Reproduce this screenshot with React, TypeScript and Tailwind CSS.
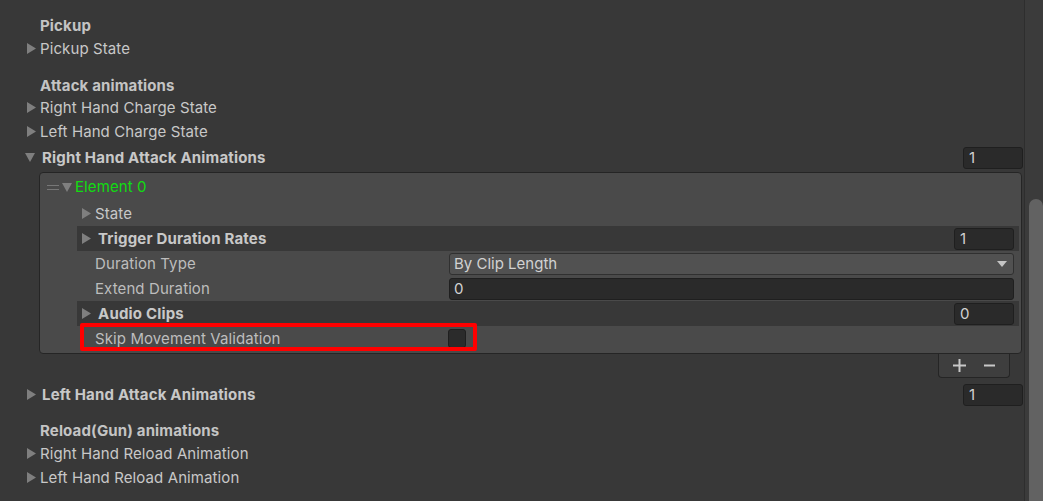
import React from 'react'

const FONT = "font-['Inter','Liberation_Sans',sans-serif]"

// foldout arrows
const TriRight = () => (
  <svg width="9" height="11" viewBox="0 0 9 11" className="shrink-0">
    <path d="M0 0 L9 5.5 L0 11 Z" fill="#7f7f7f" />
  </svg>
)

const TriDown = () => (
  <svg width="10" height="9" viewBox="0 0 10 9" className="shrink-0">
    <path d="M0 0 H10 L5 9 Z" fill="#7f7f7f" />
  </svg>
)

const CountField: React.FC<{ value: string }> = ({ value }) => (
  <div className="w-[60px] h-[22px] rounded-[3px] bg-[#2a2a2a] border border-[#1f1f1f] flex items-center pl-[5px] pt-px text-[15px] text-[#d2d2d2]">
    {value}
  </div>
)

const Header: React.FC<{ label: string; className: string }> = ({ label, className }) => (
  <div className={`flex items-center pl-[40px] pt-[2px] font-bold tracking-[0.15px] text-[15px] text-[#c4c4c4] ${className}`}>
    {label}
  </div>
)

const FoldRow: React.FC<{ label: string; className: string }> = ({ label, className }) => (
  <div className={`flex items-center pl-[27px] ${className}`}>
    <TriRight />
    <span className="ml-[4px] pt-[2px] tracking-[0.1px] text-[15px] text-[#c8c8c8]">{label}</span>
  </div>
)

const ArrayRow: React.FC<{ label: string; open?: boolean; className: string }> = ({ label, open, className }) => (
  <div className={`flex items-center pr-px ${className}`}>
    <div className={open ? 'pl-[25px] w-[42px]' : 'pl-[27px] w-[42px]'}>{open ? <TriDown /> : <TriRight />}</div>
    <span className="pt-[2px] font-bold tracking-[0.18px] text-[15px] text-[#c8c8c8]">{label}</span>
    <div className="ml-auto">
      <CountField value="1" />
    </div>
  </div>
)

const InnerRow: React.FC<{
  label: string
  fold?: boolean
  bold?: boolean
  dark?: boolean
  children?: React.ReactNode
}> = ({ label, fold, bold, dark, children }) => (
  <div className={`ml-[37px] mr-[2px] h-[25px] flex items-center ${dark ? 'bg-[#383838]' : ''}`}>
    <div className="w-[372px] flex items-center pl-[5px]">
      {fold ? (
        <>
          <TriRight />
          {bold ? (
            <span className="ml-[7px] pt-[2px] font-bold tracking-[0.18px] text-[15px] text-[#c8c8c8]">{label}</span>
          ) : (
            <span className="ml-[4px] pt-[2px] tracking-[0.1px] text-[15px] text-[#c8c8c8]">{label}</span>
          )}
        </>
      ) : (
        <span className="ml-[13px] pt-[2px] tracking-[0.1px] text-[15px] text-[#bdbdbd]">{label}</span>
      )}
    </div>
    <div className="flex-1 pr-[5px] flex">{children}</div>
  </div>
)

export default function App() {
  return (
    <div className={`w-[1043px] h-[501px] bg-[#383838] flex overflow-hidden ${FONT}`}>
      <div className="relative flex-1 flex flex-col pt-[14px]">
        <Header label="Pickup" className="h-[23px]" />
        <FoldRow label="Pickup State" className="h-[23px]" />

        <Header label="Attack animations" className="h-[22px] mt-[14px]" />
        <FoldRow label="Right Hand Charge State" className="h-[22px]" />
        <FoldRow label="Left Hand Charge State" className="h-[27px]" />
        <ArrayRow label="Right Hand Attack Animations" open className="h-[25px]" />

        {/* Reorderable list */}
        <div className="mt-[2px] ml-[39px] mr-[2px] border border-[#252525] rounded-[4px] bg-[#4a4a4a] pb-[2px]">
          <div className="h-[28px] flex items-center pl-[7px]">
            <div className="flex flex-col gap-[3px] w-[12px]">
              <div className="h-px bg-[#777777]" />
              <div className="h-px bg-[#777777]" />
            </div>
            <div className="ml-[3px]">
              <TriDown />
            </div>
            <span className="ml-[3px] pt-px tracking-[0.1px] text-[15px] text-[#11dd11]">Element 0</span>
          </div>
          <InnerRow label="State" fold />
          <InnerRow label="Trigger Duration Rates" fold bold dark>
            <div className="ml-auto">
              <CountField value="1" />
            </div>
          </InnerRow>
          <InnerRow label="Duration Type">
            <div className="flex-1 h-[22px] rounded-[3px] bg-[#515151] border border-[#303030] flex items-center pl-[4px] pr-[6px] pt-px text-[15px] text-[#d2d2d2]">
              By Clip Length
              <svg width="10" height="6" viewBox="0 0 10 6" className="ml-auto">
                <path d="M0 0 H10 L5 6 Z" fill="#c4c4c4" />
              </svg>
            </div>
          </InnerRow>
          <InnerRow label="Extend Duration">
            <div className="flex-1 h-[22px] rounded-[3px] bg-[#2a2a2a] border border-[#1f1f1f] flex items-center pl-[4px] pt-px text-[15px] text-[#d2d2d2]">
              0
            </div>
          </InnerRow>
          <InnerRow label="Audio Clips" fold bold dark>
            <div className="ml-auto">
              <CountField value="0" />
            </div>
          </InnerRow>
          <InnerRow label="Skip Movement Validation">
            <div className="-ml-px w-[18px] h-[19px] rounded-[3px] bg-[#2b2b2b] border border-[#1f1f1f]" />
          </InnerRow>
        </div>

        {/* list footer */}
        <div className="self-end mr-[14px] w-[72px] h-[24px] bg-[#3e3e3e] border-x border-b border-[#252525] rounded-b-[4px] flex items-center pl-[14px]">
          <svg width="13" height="13" viewBox="0 0 13 13">
            <path d="M6.5 0 V13 M0 6.5 H13" stroke="#c8c8c8" strokeWidth="2" />
          </svg>
          <svg width="11" height="13" viewBox="0 0 11 13" className="ml-[18px]">
            <path d="M0 6.5 H11" stroke="#c8c8c8" strokeWidth="2" />
          </svg>
        </div>

        <ArrayRow label="Left Hand Attack Animations" className="h-[25px] mt-[4px]" />

        <Header label="Reload(Gun) animations" className="h-[24px] mt-[11px]" />
        <FoldRow label="Right Hand Reload Animation" className="h-[23px]" />
        <FoldRow label="Left Hand Reload Animation" className="h-[25px]" />

        {/* highlight annotation */}
        <div className="absolute left-[80px] top-[323px] w-[397px] h-[28px] border-4 border-[#ff0000] rounded-[2px]" />
      </div>

      {/* scrollbar */}
      <div className="w-[19px] h-full flex">
        <div className="w-px bg-[#2e2e2e]" />
        <div className="flex-1 bg-[#3b3b3b] pt-[199px] pl-[4px]">
          <div className="h-full bg-[#626262] rounded-t-[7px]" />
        </div>
      </div>
    </div>
  )
}
